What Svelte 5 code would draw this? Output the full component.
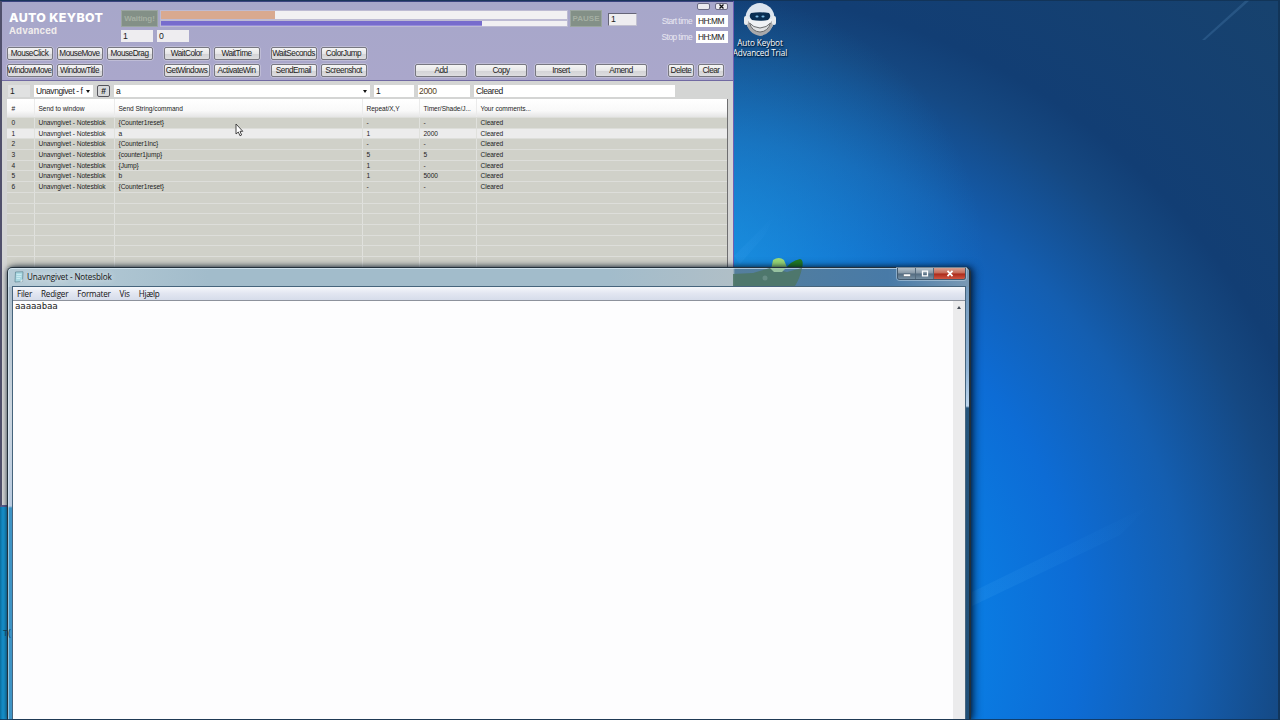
<script lang="ts">
	interface Step {
		target: string;
		command: string;
		repeat: string;
		timer: string;
		comment: string;
	}

	const target = 'Unavngivet - Notesblok';

	const steps: Step[] = [
		{ target, command: '{Counter1reset}', repeat: '-', timer: '-', comment: 'Cleared' },
		{ target, command: 'a', repeat: '1', timer: '2000', comment: 'Cleared' },
		{ target, command: '{Counter1Inc}', repeat: '-', timer: '-', comment: 'Cleared' },
		{ target, command: '{counter1jump}', repeat: '5', timer: '5', comment: 'Cleared' },
		{ target, command: '{Jump}', repeat: '1', timer: '-', comment: 'Cleared' },
		{ target, command: 'b', repeat: '1', timer: '5000', comment: 'Cleared' },
		{ target, command: '{Counter1reset}', repeat: '-', timer: '-', comment: 'Cleared' }
	];

	const emptyRows = Array.from({ length: 30 });
	const columns = ['#', 'Send to window', 'Send String/command', 'Repeat/X,Y', 'Timer/Shade/J...', 'Your comments...'];

	const commandGroups = [
		[
			['MouseClick', 'MouseMove', 'MouseDrag'],
			['WindowMove', 'WindowTitle', '']
		],
		[
			['WaitColor', 'WaitTime'],
			['GetWindows', 'ActivateWin']
		],
		[
			['WaitSeconds', 'ColorJump'],
			['SendEmail', 'Screenshot']
		]
	];

	const editActions = ['Add', 'Copy', 'Insert', 'Amend'];
	const menus = ['Filer', 'Rediger', 'Formater', 'Vis', 'Hjælp'];

	let selected = $state(1);
	let stepProgress = $state(28);
	let totalProgress = $state(79);
</script>

<div class="desktop">
	<svg class="wallpaper" viewBox="0 0 1280 720" aria-hidden="true">
		<defs>
			<linearGradient id="ray" x1="0" x2="1" y1="1" y2="0">
				<stop offset="0" stop-color="#3aa0f0" stop-opacity="0.2" />
				<stop offset="1" stop-color="#3aa0f0" stop-opacity="0" />
			</linearGradient>
		</defs>
		<path d="M972 592 L1150 505 L1120 535 L972 606Z" fill="url(#ray)" />
		<path d="M734 256 L775 215 L765 235 L740 264Z" fill="url(#ray)" />
		<path d="M1202 40 L1246 0 L1250 0 L1205 40Z" fill="#4f86b5" opacity="0.3" />
		<path d="M771 270 L773 260 Q779 256 784 260 L788 270Z" fill="#9ddc78" />
		<path d="M785 270 Q790 261 800 259 Q804 259 802 270Z" fill="#237c24" />
	</svg>

	<div class="shortcut">
		<svg width="34" height="34" viewBox="0 0 34 34">
			<ellipse cx="17" cy="15.500" rx="14.500" ry="15.500" fill="#dce5ef" />
			<path d="M3 18 Q5 31 17 33 Q29 31 31 18Z" fill="#a9a9ab" />
			<path d="M5 16 H29 Q27 28 17 29 Q7 28 5 16Z" fill="#eff2f5" />
			<path d="M6.500 20 Q10 24.500 17 25 Q24 24.500 27.500 20 Q25 28.500 17 29 Q9 28.500 6.500 20Z" fill="#dfe1e3" stroke="#5b5d5f" stroke-width="0.900" />
			<rect x="1" y="13" width="4" height="9" rx="2" fill="#e8ebee" />
			<rect x="29" y="13" width="4" height="9" rx="2" fill="#e8ebee" />
			<path d="M8 10 Q17 8.500 26 10 Q29 13.500 25 17 Q17 18.500 9 17 Q5 13.500 8 10Z" fill="#092e52" />
			<ellipse cx="14" cy="13.500" rx="1.600" ry="1.100" fill="#7ab9e2" />
			<ellipse cx="20" cy="13.500" rx="1.600" ry="1.100" fill="#7ab9e2" />
		</svg>
		<span>Auto Keybot<br />Advanced Trial</span>
	</div>

	<section class="keybot">
		<header>
			<div class="status">
				<div class="brand">
					<strong>AUTO KEYBOT</strong>
					<span>Advanced</span>
				</div>
				<div class="run">
					<div class="run-row">
						<span class="badge waiting">Waiting!</span>
						<div class="progress">
							<div class="track"><i class="step" style="width: {stepProgress}%"></i></div>
							<div class="track thin"><i class="total" style="width: {totalProgress}%"></i></div>
						</div>
						<span class="badge pause">PAUSE</span>
						<span class="field loops">1</span>
					</div>
					<div class="counters">
						<span class="field">1</span>
						<span class="field">0</span>
					</div>
				</div>
				<div class="schedule">
					<div class="win-buttons">
						<button aria-label="Minimize"></button>
						<button aria-label="Close">
							<svg width="5" height="5" viewBox="0 0 5 5"><path d="M0.500 0.500 L4.500 4.500 M4.500 0.500 L0.500 4.500" stroke="#111" stroke-width="1.300" /></svg>
						</button>
					</div>
					<div class="time"><span>Start time</span><b>HH:MM</b></div>
					<div class="time"><span>Stop time</span><b>HH:MM</b></div>
				</div>
			</div>

			<div class="toolbar">
				{#each commandGroups as group}
					<div class="group">
						{#each group as row}
							<div class="group-row">
								{#each row as name}
									{#if name}<button>{name}</button>{/if}
								{/each}
							</div>
						{/each}
					</div>
				{/each}
				<div class="actions">
					{#each editActions as name}
						<button>{name}</button>
					{/each}
				</div>
				<div class="clearing">
					<button>Delete</button>
					<button>Clear</button>
				</div>
			</div>
		</header>

		<div class="editor">
			<span class="cell index">1</span>
			<span class="cell combo"><em>Unavngivet - f</em><i class="arrow"></i></span>
			<button class="hash">#</button>
			<span class="cell combo command"><em>a</em><i class="arrow"></i></span>
			<span class="cell">1</span>
			<span class="cell timer">2000</span>
			<span class="cell">Cleared</span>
		</div>

		<div class="steps">
			<div class="row head">
				{#each columns as column}<span>{column}</span>{/each}
			</div>
			{#each steps as step, i}
				<div class="row" class:selected={i === selected}>
					<span>{i}</span>
					<span>{step.target}</span>
					<span>{step.command}</span>
					<span>{step.repeat}</span>
					<span>{step.timer}</span>
					<span>{step.comment}</span>
				</div>
			{/each}
			{#each emptyRows as _}
				<div class="row">
					{#each columns as _column}<span></span>{/each}
				</div>
			{/each}
		</div>
	</section>

	<section class="notepad">
		<div class="titlebar">
			<svg class="note-icon" width="10" height="12" viewBox="0 0 10 12">
				<path d="M1.500 1 L9 0.800 L8.500 10.500 L1 11Z" fill="#a9d8e2" stroke="#5d828f" stroke-width="0.700" />
				<path d="M2.500 3.500 H7.500 M2.500 5.500 H7.300 M2.500 7.500 H6" stroke="#d2eff5" stroke-width="0.800" />
				<path d="M6 11 L8.500 8 V10.600Z" fill="#e9edf0" />
			</svg>
			<span>Unavngivet - Notesblok</span>
			<div class="leaf">
				<svg width="70" height="18" viewBox="0 0 70 18">
					<path d="M0 6 L20 5 L37 0 L54 4 L69 0 Q67 10 62 18 L0 18Z" fill="#4e7664" />
					<path d="M37 0 H53 L49 4 H41Z" fill="#a3cda0" />
					<circle cx="32" cy="10" r="2.500" fill="#6b8f80" />
				</svg>
			</div>
			<div class="caption">
				<button aria-label="Minimize">
					<svg width="8" height="7" viewBox="0 0 8 7"><path d="M0.500 4 H7.500 V6.500 H0.500Z" fill="#fff" stroke="#4b5b69" stroke-width="0.500" /></svg>
				</button>
				<button aria-label="Maximize">
					<svg width="8" height="7" viewBox="0 0 8 7"><path d="M1.500 1.200 H6.500 V5.800 H1.500Z" fill="none" stroke="#fff" stroke-width="1.300" /></svg>
				</button>
				<button class="close" aria-label="Close">
					<svg width="8" height="7" viewBox="0 0 8 7"><path d="M1.500 0.800 L6.500 6.200 M6.500 0.800 L1.500 6.200" stroke="#fff" stroke-width="1.700" /></svg>
				</button>
			</div>
		</div>
		<div class="client">
			<nav>
				{#each menus as menu}<span>{menu}</span>{/each}
			</nav>
			<div class="page">
				<pre>aaaaabaa</pre>
				<div class="scrollbar"><i></i></div>
			</div>
		</div>
	</section>

	<span class="covered-label">T(</span>

	<svg class="cursor" width="9" height="14" viewBox="0 0 9 14">
		<path d="M1 1 V11 L3.300 9 L5 12.800 L6.600 12 L5 8.300 H7.800Z" fill="#fff" stroke="#333" stroke-width="0.900" />
	</svg>
</div>

<style>
	.desktop {
		position: relative;
		width: 1280px;
		height: 720px;
		overflow: hidden;
		font-family: 'Liberation Sans', Arial, sans-serif;
		font-size: 8.2px;
		color: #222;
		background:
			radial-gradient(circle at 715px 265px, rgba(32, 160, 225, 0.65), rgba(32, 140, 220, 0) 270px),
			radial-gradient(circle at 690px 640px, #0a7be2 290px, #0d6cd5 390px, #145eb0 500px, #154882 600px, #123e74 650px, #17426e 860px);
	}

	/* Thin dark rim around the whole screen. */
	.desktop::after {
		content: '';
		position: absolute;
		inset: 0;
		border: 1px solid #123253;
		border-width: 1px 2px 1px 0;
		opacity: 0.8;
		pointer-events: none;
	}

	.wallpaper {
		position: absolute;
		inset: 0;
	}

	button {
		display: flex;
		align-items: center;
		justify-content: center;
		box-sizing: border-box;
		margin: 0;
		padding: 0;
		font: inherit;
		color: inherit;
		letter-spacing: inherit;
		white-space: nowrap;
	}

	.shortcut {
		position: absolute;
		left: 725px;
		top: 3px;
		width: 70px;
		display: flex;
		flex-direction: column;
		align-items: center;
		font: 8.2px/10px 'Open Sans', sans-serif;
		letter-spacing: -0.12px;
		color: #fff;
		text-align: center;
		white-space: nowrap;
		text-shadow: 0 1px 2px #001c38, 1px 1px 1px #001c38;
	}

	.shortcut svg {
		margin-bottom: 1px;
	}

	.covered-label {
		position: absolute;
		left: 3px;
		top: 629px;
		color: #173c52;
	}

	/* Left strip of the desktop that stays visible below the main window. */
	.desktop::before {
		content: '';
		position: absolute;
		left: 0;
		top: 506px;
		width: 12px;
		height: 214px;
		background: linear-gradient(90deg, #0a6c9f, #1796d2 3px, #1796d2 6px, #0b6796);
	}

	.keybot {
		position: absolute;
		left: 0;
		top: 0;
		width: 734px;
		height: 507px;
		box-sizing: border-box;
		overflow: hidden;
		border: 2px solid #5b5e91;
		border-top-color: #3b4480;
		border-right: 1px solid #705eb2;
		border-left-color: #50506b;
		background: #d4d5d4;
		letter-spacing: -0.48px;
	}

	header {
		height: 79px;
		box-sizing: border-box;
		background: linear-gradient(#a7a7ca, #aaa7cb);
		border-bottom: 1px solid #716aa2;
	}

	.status {
		display: flex;
		height: 45px;
	}

	.brand {
		display: flex;
		flex-direction: column;
		width: 112px;
		padding: 9px 0 0 7px;
		color: #fff;
		white-space: nowrap;
	}

	.brand strong {
		font: 800 12.4px/14px Inter, sans-serif;
		letter-spacing: 0.35px;
	}

	.brand span {
		font: bold 9.4px/11px Inter, sans-serif;
		letter-spacing: 0.2px;
		color: #f0ecec;
	}

	.run {
		flex: 1;
		padding-top: 8px;
	}

	.run-row {
		display: flex;
		gap: 2px;
	}

	.badge {
		box-sizing: border-box;
		height: 17px;
		background: #839087;
		border: 1px solid #9aa5a0;
		color: #a5afa3;
		font: bold 8px/15px 'Liberation Sans', sans-serif;
		letter-spacing: 0;
		text-align: center;
		overflow: hidden;
	}

	.waiting {
		width: 37px;
		letter-spacing: -0.1px;
	}

	.pause {
		width: 32px;
	}

	.progress {
		display: flex;
		flex-direction: column;
		gap: 2px;
		width: 408px;
		height: 17px;
		box-sizing: border-box;
		padding: 1px;
		background: #bdbbd3;
	}

	.track {
		height: 8px;
		background: #f1f0f2;
	}

	.track.thin {
		height: 5px;
	}

	.track i {
		display: block;
		height: 100%;
	}

	.step {
		background: #d9a98f;
	}

	.total {
		background: linear-gradient(#776ccd 75%, #a9a3e3);
	}

	.field {
		box-sizing: border-box;
		width: 32px;
		height: 12px;
		padding-left: 2px;
		background: #eeedf0;
		font-size: 8.7px;
		line-height: 12px;
	}

	.loops {
		width: 29px;
		height: 13px;
		margin: 3px 0 0 4px;
		border: 1px solid #777787;
		border-color: #656578 #c2c1d0 #c2c1d0 #656578;
		line-height: 11px;
	}

	.counters {
		display: flex;
		gap: 4px;
		margin-top: 3px;
	}

	.schedule {
		display: flex;
		flex-direction: column;
		gap: 4px;
		padding-right: 5px;
	}

	.win-buttons {
		display: flex;
		justify-content: flex-end;
		gap: 5px;
		height: 8px;
		padding-top: 1px;
		box-sizing: border-box;
	}

	.win-buttons button {
		width: 13px;
		height: 7px;
		border: 1px solid #696982;
		border-radius: 2px;
		background: #ecebef;
	}

	.time {
		display: flex;
		align-items: center;
		justify-content: flex-end;
		gap: 4px;
		height: 12px;
		color: #e9e7f2;
		font-size: 8.4px;
		letter-spacing: -0.55px;
	}

	.time:nth-child(2) {
		margin-top: 1px;
	}

	.time b {
		width: 30px;
		padding-left: 2px;
		background: #fff;
		color: #222;
		font-weight: normal;
		line-height: 12px;
		letter-spacing: -0.5px;
	}

	.toolbar {
		display: flex;
		align-items: flex-end;
		padding-left: 4.5px;
	}

	.toolbar button {
		height: 13px;
		border: 1px solid #777780;
		border-radius: 2px;
		box-shadow: 0 0 0 0.5px #d4d2e2;
		background: linear-gradient(#f5f5f5, #e7e7e8 50%, #d3d3d6 55%, #dedee0);
	}

	.group {
		display: flex;
		flex-direction: column;
		gap: 4px;
		margin-right: 11px;
	}

	.group-row {
		display: flex;
		gap: 4px;
	}

	.group button {
		width: 46px;
	}

	.actions {
		display: flex;
		gap: 8px;
		margin-left: 37.5px;
	}

	.actions button {
		width: 52px;
	}

	.clearing {
		display: flex;
		gap: 4px;
		margin-left: 21px;
	}

	.clearing button {
		width: 26px;
	}

	.editor {
		display: grid;
		grid-template-columns: 22px 59px 13px 256px 40px 53px 200px;
		column-gap: 4px;
		padding: 4px 0 0 6px;
		height: 17px;
		box-sizing: border-box;
		font-size: 8.5px;
		letter-spacing: -0.42px;
	}

	.cell {
		display: flex;
		align-items: center;
		height: 12px;
		padding-left: 2px;
		background: #fff;
		white-space: nowrap;
	}

	.index {
		background: #e0e1e1;
	}

	.timer {
		padding-left: 1px;
		margin-right: 1px;
		color: #57431b;
		letter-spacing: -0.3px;
	}

	.cell:last-child {
		margin-left: -1px;
	}

	.combo em {
		flex: 1;
		font-style: normal;
	}

	.arrow {
		flex: none;
		margin: 0 3px 0 2px;
		border: 2.5px solid transparent;
		border-top: 3px solid #111;
		border-bottom: 0;
	}

	.hash {
		height: 12px;
		border: 1px solid #55555c;
		border-radius: 2px;
		background: #d8d9db;
		font-weight: bold;
	}

	.steps {
		margin: 1px 5px 0 5px;
		border-right: 1px solid #6e6e70;
		background: #d0d1c9;
		font-size: 6.6px;
		letter-spacing: -0.05px;
	}

	.row {
		display: grid;
		grid-template-columns: 28px 80px 248px 57px 57px 1fr;
		height: 10.7px;
		line-height: 10px;
		box-sizing: border-box;
		border-bottom: 1px solid #dddeda;
	}

	.row span {
		padding-left: 3.5px;
		border-right: 1px solid #e0e1dd;
		white-space: nowrap;
		overflow: hidden;
	}

	.row span:first-child {
		padding-left: 4.5px;
	}

	.row span:last-child {
		border-right: 0;
	}

	.row.head {
		height: 19px;
		line-height: 20px;
		background: linear-gradient(#fff, #f9f9f9 65%, #e5e5e5);
	}

	.row.head span {
		border-color: #ebebeb;
	}

	.row.selected {
		background: #ececec;
	}

	.notepad {
		position: absolute;
		left: 7px;
		top: 267px;
		width: 964px;
		height: 453px;
		box-sizing: border-box;
		display: flex;
		flex-direction: column;
		padding: 0 3px 0 4px;
		border: 1px solid #22303b;
		border-right-width: 2px;
		border-bottom: 0;
		border-radius: 5px 5px 0 0;
		background:
			linear-gradient(90deg, #b6cbd6 0 40px, #a2bccb 200px 600px, #b0bfc7 725px, #557f9d 727px, #487aa7 880px, #7898b4 958px) 0 0 / 100% 19px no-repeat,
			linear-gradient(#a3b7c6, #ccd6df 140px, #b9cbe0 238px, #3f94c5 240px) 0 0 / 6px 100% no-repeat,
			linear-gradient(#6d94b7, #91b4d6 100px, #bdd6ee 138px, #25547b 140px, #204f77) 100% 0 / 6px 100% no-repeat;
		box-shadow: 0 0 4px rgba(10, 25, 40, 0.65), 3px 0 8px rgba(0, 15, 40, 0.7), inset 0 1px 0 rgba(230, 245, 255, 0.6), inset 1px 0 0 rgba(230, 245, 255, 0.5);
	}

	.titlebar {
		display: flex;
		align-items: flex-start;
		height: 18px;
		font: 8.1px/18px 'Open Sans', sans-serif;
		letter-spacing: -0.13px;
		color: #111;
	}

	.note-icon {
		margin: 3px 3px 0 2px;
	}

	.titlebar span {
		width: 90px;
		white-space: nowrap;
		text-shadow: 0 0 6px #fff;
	}

	.leaf {
		flex: 1;
		display: flex;
		padding-left: 616px;
		opacity: 0.85;
	}

	.caption {
		display: flex;
		height: 11px;
		overflow: hidden;
		border: 1px solid #42596d;
		border-top: 0;
		border-radius: 0 0 3px 3px;
		box-shadow: 0 0 0 1px rgba(200, 220, 235, 0.5);
	}

	.caption button {
		width: 18px;
		border: 0;
		border-right: 1px solid #546a7c;
		background: linear-gradient(#b3c0ca, #8496a5 48%, #526a7f 52%, #7790a3);
	}

	.caption .close {
		width: 31px;
		border-right: 0;
		background: linear-gradient(#d6a091, #c56754 48%, #aa2818 52%, #d05743);
	}

	.client {
		flex: 1;
		display: flex;
		flex-direction: column;
		border: 1px solid #46647c;
		border-bottom: 1px solid #555b62;
	}

	nav {
		display: flex;
		gap: 9px;
		height: 13px;
		padding-left: 4px;
		border-bottom: 1px solid #8d929c;
		background: linear-gradient(#f5f7fb, #e2e6f1 50%, #d6dcea);
		font: 8.1px/13px 'Open Sans', sans-serif;
		letter-spacing: -0.22px;
		color: #111;
	}

	.page {
		flex: 1;
		display: flex;
		background: #fdfdfe;
	}

	pre {
		flex: 1;
		margin: 0;
		padding: 0 0 0 2px;
		font: 9px/11px 'DejaVu Sans Mono', monospace;
		letter-spacing: -0.08px;
		color: #222;
	}

	.scrollbar {
		display: flex;
		justify-content: center;
		width: 12px;
		padding-top: 5px;
		background: #ebebec;
	}

	.scrollbar i {
		width: 0;
		height: 0;
		border: 2px solid transparent;
		border-bottom: 3px solid #454b54;
		border-top: 0;
	}

	.cursor {
		position: absolute;
		left: 235px;
		top: 123px;
	}
</style>
